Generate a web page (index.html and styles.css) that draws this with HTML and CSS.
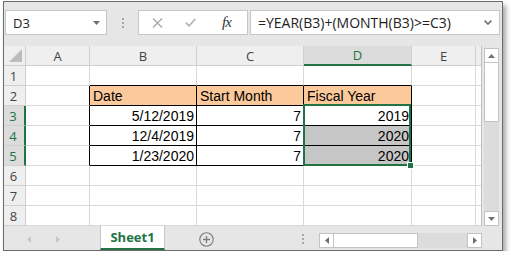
FILE: index.html
```html
<!DOCTYPE html>
<html lang="en">
<head>
    <meta charset="UTF-8">
    <title>Fiscal Year</title>
    <link rel="stylesheet" href="styles.css">
</head>
<body>
    <div class="window">
        <div class="formula-bar">
            <div class="name-box">
                <span>D3</span>
                <svg class="caret" width="7" height="4" viewBox="0 0 7 4"><path d="M0 0h7L3.5 4z" fill="#6e6e6e"/></svg>
            </div>
            <div class="grip"><i></i><i></i><i></i></div>
            <div class="fx-buttons">
                <span class="slot"><svg width="11" height="10" viewBox="0 0 11 10"><path d="M1 .5l9 9M10 .5l-9 9" stroke="#a8a8a8" stroke-width="1.3"/></svg></span>
                <span class="slot"><svg width="11" height="9" viewBox="0 0 11 9"><path d="M.8 4.6l3.3 3.3L10.3 1" stroke="#b4b4b4" stroke-width="1.6" fill="none"/></svg></span>
                <span class="slot fx">fx</span>
            </div>
            <div class="formula">
                <span>=YEAR(B3)+(MONTH(B3)&gt;=C3)</span>
                <svg class="chevron" width="8" height="5" viewBox="0 0 8 5"><path d="M.6.6 4 4 7.4.6" stroke="#707070" stroke-width="1.6" fill="none"/></svg>
            </div>
        </div>

        <div class="sheet">
            <div class="grid">
                <div class="head corner"><svg width="13" height="13" viewBox="0 0 13 13"><path d="M13 0v13H0z" fill="#bcbcbc"/></svg></div>
                <div class="head">A</div>
                <div class="head">B</div>
                <div class="head">C</div>
                <div class="head active-col">D</div>
                <div class="head">E</div>
                <div class="head last"></div>

                <div class="head row">1</div>
                <div class="cell"></div>
                <div class="cell edge-t"></div>
                <div class="cell edge-t"></div>
                <div class="cell edge-t"></div>
                <div class="cell"></div>
                <div class="cell last"></div>

                <div class="head row">2</div>
                <div class="cell edge-l"></div>
                <div class="cell tb hd">Date</div>
                <div class="cell tb hd">Start Month</div>
                <div class="cell tb hd">Fiscal Year</div>
                <div class="cell"></div>
                <div class="cell last"></div>

                <div class="head row active-row">3</div>
                <div class="cell edge-l"></div>
                <div class="cell tb num">5/12/2019</div>
                <div class="cell tb num">7</div>
                <div class="cell tb num">2019</div>
                <div class="cell"></div>
                <div class="cell last"></div>

                <div class="head row active-row">4</div>
                <div class="cell edge-l"></div>
                <div class="cell tb num">12/4/2019</div>
                <div class="cell tb num">7</div>
                <div class="cell tb num shade">2020</div>
                <div class="cell"></div>
                <div class="cell last"></div>

                <div class="head row active-row">5</div>
                <div class="cell edge-l"></div>
                <div class="cell tb num">1/23/2020</div>
                <div class="cell tb num">7</div>
                <div class="cell tb num shade">2020</div>
                <div class="cell"></div>
                <div class="cell last"></div>

                <div class="head row">6</div>
                <div class="cell"></div>
                <div class="cell"></div>
                <div class="cell"></div>
                <div class="cell"></div>
                <div class="cell"></div>
                <div class="cell last"></div>

                <div class="head row">7</div>
                <div class="cell"></div>
                <div class="cell"></div>
                <div class="cell"></div>
                <div class="cell"></div>
                <div class="cell"></div>
                <div class="cell last"></div>

                <div class="head row">8</div>
                <div class="cell"></div>
                <div class="cell"></div>
                <div class="cell"></div>
                <div class="cell"></div>
                <div class="cell"></div>
                <div class="cell last"></div>

                <div class="selection"><span class="handle"></span></div>
            </div>

            <div class="vscroll">
                <div class="sb-btn"><svg width="7" height="4" viewBox="0 0 7 4"><path d="M0 4h7L3.5 0z" fill="#707070"/></svg></div>
                <div class="sb-thumb v"></div>
                <div class="sb-track"></div>
                <div class="sb-btn"><svg width="7" height="4" viewBox="0 0 7 4"><path d="M0 0h7L3.5 4z" fill="#707070"/></svg></div>
            </div>
        </div>

        <div class="tabs">
            <div class="tab-nav">
                <svg width="4" height="7" viewBox="0 0 4 7"><path d="M4 0v7L0 3.5z" fill="#c6c6c6"/></svg>
                <svg width="4" height="7" viewBox="0 0 4 7"><path d="M0 0v7l4-3.5z" fill="#c6c6c6"/></svg>
            </div>
            <div class="tab">Sheet1</div>
            <div class="add-sheet">
                <svg width="15" height="15" viewBox="0 0 15 15"><circle cx="7.5" cy="7.5" r="6.7" stroke="#7c7c7c" stroke-width="1.1" fill="none"/><path d="M7.5 4v7M4 7.5h7" stroke="#7c7c7c" stroke-width="1.3"/></svg>
            </div>
            <div class="grip tab-grip"><i></i><i></i><i></i></div>
            <div class="hscroll">
                <div class="sb-btn"><svg width="4" height="7" viewBox="0 0 4 7"><path d="M4 0v7L0 3.5z" fill="#707070"/></svg></div>
                <div class="sb-thumb h"></div>
                <div class="sb-track"></div>
                <div class="sb-btn"><svg width="4" height="7" viewBox="0 0 4 7"><path d="M0 0v7l4-3.5z" fill="#707070"/></svg></div>
            </div>
        </div>
    </div>
</body>
</html>
```

FILE: styles.css
```css
body {
    margin: 0;
    background: #fff;
    font-family: "Open Sans", "Noto Sans", sans-serif;
}

.window {
    box-sizing: border-box;
    width: 500px;
    height: 250px;
    margin: 1px 0 0 3px;
    border: 1px solid #6b6b6b;
    background: #e6e6e6;
    box-shadow: 3px 4px 5px rgba(0, 0, 0, 0.35);
    display: flex;
    flex-direction: column;
}

/* formula bar */

.formula-bar {
    box-sizing: border-box;
    height: 44px;
    padding-top: 8px;
    display: flex;
    align-items: flex-start;
}

.name-box,
.fx-buttons,
.formula {
    box-sizing: border-box;
    height: 25px;
    background: #fff;
    border: 1px solid #c6c6c6;
    display: flex;
    align-items: center;
}

.name-box {
    width: 102px;
    margin-left: 1px;
    padding: 0 6px 0 7px;
    font-size: 13px;
    color: #222;
}

.caret,
.chevron {
    margin-left: auto;
}

.grip {
    width: 31px;
    height: 25px;
    display: flex;
    flex-direction: column;
    align-items: center;
    justify-content: center;
    gap: 2px;
}

.grip i {
    width: 2px;
    height: 2px;
    background: #a6a6a6;
}

.fx-buttons {
    width: 110px;
    padding-left: 2px;
}

.slot {
    width: 33px;
    display: flex;
    justify-content: center;
}

.fx {
    font-family: "Liberation Serif", serif;
    font-style: italic;
    font-size: 15px;
    color: #333;
    letter-spacing: -1px;
    padding-left: 3px;
}

.formula {
    flex: 1;
    margin: 0 2px 0 2px;
    padding: 0 7px 0 7px;
    font-size: 14px;
    color: #222;
}

/* sheet */

.sheet {
    height: 180px;
    display: flex;
}

.grid {
    position: relative;
    width: 478px;
    background: #fff;
    border-right: 1px solid #c0c0c0;
    box-sizing: border-box;
    display: grid;
    grid-template-columns: 22px 64px 107px 107px 108px 64px 1fr;
    grid-auto-rows: 20px;
}

.head,
.cell {
    box-sizing: border-box;
    border-right: 1px solid #d8d8d8;
    border-bottom: 1px solid #d8d8d8;
}

.head {
    background: #efefef;
    border-color: #d0d0d0;
    color: #444;
    font-size: 13px;
    display: flex;
    align-items: center;
    justify-content: center;
}

.head.row {
    padding: 1px 2px 0 0;
}

.corner {
    align-items: flex-end;
    justify-content: flex-end;
    padding: 0 3px 3px 0;
}

.active-col {
    background: #dcdcdc;
    color: #217346;
    border-bottom: 2px solid #217346;
}

.active-row {
    background: #dcdcdc;
    color: #217346;
    border-right: 2px solid #217346;
}

.last {
    border-right: none;
}

.cell {
    font-family: "Liberation Sans", Arial, sans-serif;
    font-size: 14px;
    color: #000;
    padding: 2px 2px 0 3px;
    line-height: 17px;
    white-space: nowrap;
}

.tb {
    border-right-color: #000;
    border-bottom-color: #000;
}

.edge-t {
    border-bottom-color: #000;
}

.edge-l {
    border-right-color: #000;
}

.hd {
    background: #fcc99b;
}

.num {
    text-align: right;
    padding-right: 2px;
}

.shade {
    background: #c6c6c6;
}

.selection {
    position: absolute;
    left: 299px;
    top: 58px;
    width: 108px;
    height: 62px;
    box-sizing: border-box;
    border: 2px solid #217346;
}

.handle {
    position: absolute;
    right: -5px;
    bottom: -5px;
    width: 5px;
    height: 5px;
    background: #217346;
    border: 1px solid #fff;
}

/* scrollbars */

.vscroll {
    width: 20px;
    padding: 2px 0 0 2px;
    box-sizing: border-box;
    display: flex;
    flex-direction: column;
}

.sb-btn {
    box-sizing: border-box;
    width: 15px;
    height: 15px;
    background: #fff;
    border: 1px solid #c4c4c4;
    display: flex;
    align-items: center;
    justify-content: center;
    flex-shrink: 0;
}

.sb-thumb {
    box-sizing: border-box;
    background: #fff;
    border: 1px solid #c4c4c4;
}

.sb-thumb.v {
    width: 15px;
    height: 60px;
    margin-top: -1px;
}

.sb-track {
    flex: 1;
    background: #dcdcdc;
}

.vscroll .sb-track {
    width: 15px;
}

/* sheet tabs */

.tabs {
    flex: 1;
    display: flex;
}

.tab-nav {
    width: 96px;
    display: flex;
    align-items: center;
    gap: 25px;
    padding: 2px 0 0 23px;
    box-sizing: border-box;
}

.tab {
    box-sizing: border-box;
    width: 65px;
    background: #fff;
    border-left: 1px solid #c6c6c6;
    border-right: 1px solid #c6c6c6;
    border-bottom: 2px solid #217346;
    color: #217346;
    font-weight: bold;
    font-size: 13px;
    display: flex;
    align-items: center;
    justify-content: center;
}

.add-sheet {
    width: 83px;
    display: flex;
    align-items: center;
    justify-content: center;
    padding-top: 2px;
}

.tab-grip {
    width: 71px;
    height: auto;
    align-items: flex-end;
    padding: 2px 15px 0 0;
    box-sizing: border-box;
}

.hscroll {
    width: 163px;
    height: 15px;
    margin-top: 7px;
    display: flex;
}

.sb-thumb.h {
    width: 85px;
    height: 15px;
    margin-left: -1px;
}
```
